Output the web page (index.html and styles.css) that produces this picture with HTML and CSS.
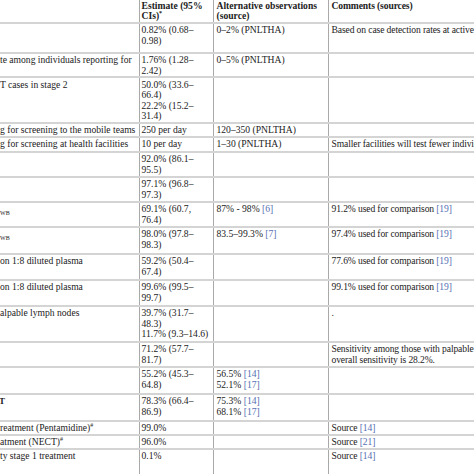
FILE: index.html
```html
<!DOCTYPE html>
<html>
<head>
<meta charset="utf-8">
<link rel="stylesheet" href="styles.css">
</head>
<body>
<table class="tbl">
  <colgroup>
    <col class="w1"><col class="w2"><col class="w3"><col class="w4">
  </colgroup>
  <tr class="head h22">
    <td class="c1"></td>
    <td class="c2">Estimate (95%<br>CIs)<sup>*</sup></td>
    <td class="c3">Alternative observations<br>(source)</td>
    <td class="c4">Comments (sources)</td>
  </tr>
  <tr class="h30">
    <td class="c1"></td>
    <td class="c2">0.82% (0.68–<br>0.98)</td>
    <td class="c3">0–2% (PNLTHA)</td>
    <td class="c4">Based on case detection rates at active</td>
  </tr>
  <tr class="h20">
    <td class="c1">te among individuals reporting for</td>
    <td class="c2">1.76% (1.28–<br>2.42)</td>
    <td class="c3">0–5% (PNLTHA)</td>
    <td class="c4"></td>
  </tr>
  <tr class="h45">
    <td class="c1">T cases in stage 2</td>
    <td class="c2">50.0% (33.6–<br>66.4)<br>22.2% (15.2–<br>31.4)</td>
    <td class="c3"></td>
    <td class="c4"></td>
  </tr>
  <tr class="h13">
    <td class="c1">g for screening to the mobile teams</td>
    <td class="c2">250 per day</td>
    <td class="c3">120–350 (PNLTHA)</td>
    <td class="c4"></td>
  </tr>
  <tr class="h15">
    <td class="c1">g for screening at health facilities</td>
    <td class="c2">10 per day</td>
    <td class="c3">1–30 (PNLTHA)</td>
    <td class="c4">Smaller facilities will test fewer individ</td>
  </tr>
  <tr class="h25">
    <td class="c1"></td>
    <td class="c2">92.0% (86.1–<br>95.5)</td>
    <td class="c3"></td>
    <td class="c4"></td>
  </tr>
  <tr class="h25">
    <td class="c1"></td>
    <td class="c2">97.1% (96.8–<br>97.3)</td>
    <td class="c3"></td>
    <td class="c4"></td>
  </tr>
  <tr class="h25">
    <td class="c1"><span class="sub">WB</span></td>
    <td class="c2">69.1% (60.7,<br>76.4)</td>
    <td class="c3">87% - 98% <span class="ref">[6]</span></td>
    <td class="c4">91.2% used for comparison <span class="ref">[19]</span></td>
  </tr>
  <tr class="h27">
    <td class="c1"><span class="sub">WB</span></td>
    <td class="c2">98.0% (97.8–<br>98.3)</td>
    <td class="c3">83.5–99.3% <span class="ref">[7]</span></td>
    <td class="c4">97.4% used for comparison <span class="ref">[19]</span></td>
  </tr>
  <tr class="h26">
    <td class="c1">on 1:8 diluted plasma</td>
    <td class="c2">59.2% (50.4–<br>67.4)</td>
    <td class="c3"></td>
    <td class="c4">77.6% used for comparison <span class="ref">[19]</span></td>
  </tr>
  <tr class="h26">
    <td class="c1">on 1:8 diluted plasma</td>
    <td class="c2">99.6% (99.5–<br>99.7)</td>
    <td class="c3"></td>
    <td class="c4">99.1% used for comparison <span class="ref">[19]</span></td>
  </tr>
  <tr class="h36">
    <td class="c1">alpable lymph nodes</td>
    <td class="c2">39.7% (31.7–<br>48.3)<br>11.7% (9.3–14.6)</td>
    <td class="c3"></td>
    <td class="c4">.</td>
  </tr>
  <tr class="h25">
    <td class="c1"></td>
    <td class="c2">71.2% (57.7–<br>81.7)</td>
    <td class="c3"></td>
    <td class="c4">Sensitivity among those with palpable<br>overall sensitivity is 28.2%.</td>
  </tr>
  <tr class="h27">
    <td class="c1"></td>
    <td class="c2">55.2% (45.3–<br>64.8)</td>
    <td class="c3">56.5% <span class="ref">[14]</span><br>52.1% <span class="ref">[17]</span></td>
    <td class="c4"></td>
  </tr>
  <tr class="h27">
    <td class="c1"><b class="cut">T</b></td>
    <td class="c2">78.3% (66.4–<br>86.9)</td>
    <td class="c3">75.3% <span class="ref">[14]</span><br>68.1% <span class="ref">[17]</span></td>
    <td class="c4"></td>
  </tr>
  <tr class="h13">
    <td class="c1">reatment (Pentamidine)<sup>#</sup></td>
    <td class="c2">99.0%</td>
    <td class="c3"></td>
    <td class="c4">Source <span class="ref">[14]</span></td>
  </tr>
  <tr class="h13">
    <td class="c1">atment (NECT)<sup>#</sup></td>
    <td class="c2">96.0%</td>
    <td class="c3"></td>
    <td class="c4">Source <span class="ref">[21]</span></td>
  </tr>
  <tr class="h30 last">
    <td class="c1">ty stage 1 treatment</td>
    <td class="c2">0.1%</td>
    <td class="c3"></td>
    <td class="c4">Source <span class="ref">[14]</span></td>
  </tr>
</table>
</body>
</html>
```
FILE: styles.css
```css
html, body {
  margin: 0;
  padding: 0;
  width: 474px;
  height: 474px;
  overflow: hidden;
  background: #ffffff;
}

.tbl {
  border-collapse: collapse;
  table-layout: fixed;
  width: 474px;
  font-family: "Liberation Serif", "Times New Roman", serif;
  font-size: 9.6px;
  line-height: 10.5px;
  color: #222222;
}

.w1 { width: 139px; }
.w2 { width: 74px; }
.w3 { width: 115px; }
.w4 { width: 146px; }

.tbl td {
  vertical-align: top;
  padding: 1.5px 3px 0 3px;
  border-bottom: 2px solid #d4d4d4;
  white-space: nowrap;
  overflow: hidden;
}

.tbl td.c1 {
  padding-left: 0;
  border-right: 1px solid #a9a9a9;
}

.tbl td.c2 {
  padding-left: 2px;
  border-right: 1px solid #a9a9a9;
}

.tbl td.c3 {
  border-right: 1px solid #a9a9a9;
}

.tbl td.c4 {
  padding-right: 0;
  letter-spacing: -0.12px;
}

.head td {
  font-weight: bold;
  padding-top: 0.5px;
}

.last td { border-bottom: none; }

sup {
  font-size: 6px;
  line-height: 0;
  vertical-align: 4px;
}

.sub {
  font-size: 6px;
  position: relative;
  top: 3px;
  letter-spacing: 0.2px;
}

.cut {
  display: inline-block;
  margin-left: -1px;
  font-size: 9px;
}

.ref { color: #5670b3; }

.h13 { height: 13px; }
.h15 { height: 15px; }
.h20 { height: 20px; }
.h22 { height: 22px; }
.h25 { height: 25px; }
.h26 { height: 26px; }
.h27 { height: 27px; }
.h30 { height: 30px; }
.h36 { height: 36px; }
.h45 { height: 45px; }
```
